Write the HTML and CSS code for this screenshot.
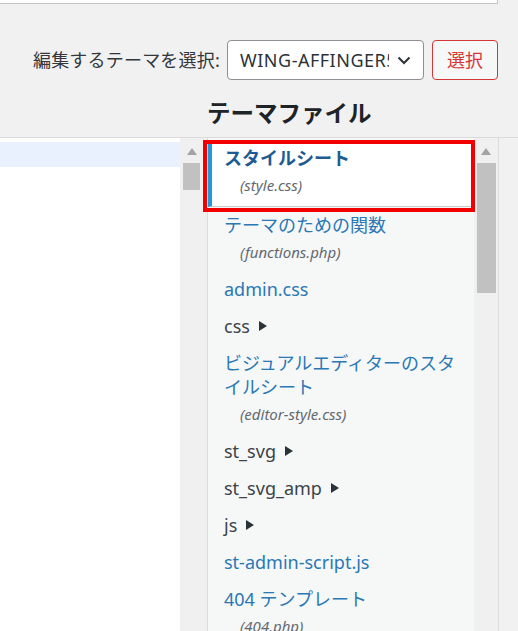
FILE: index.html
```html
<!DOCTYPE html>
<html lang="ja">
<head>
<meta charset="utf-8">
<title>テーマファイル</title>
<link rel="stylesheet" href="styles.css">
</head>
<body>
<div class="page">
  <div class="topbox"></div>

  <form class="theme-select">
    <label class="label">編集するテーマを選択:</label>
    <div class="select">
      <span class="select-text">WING-AFFINGER5</span>
      <svg class="chevron" width="14" height="9" viewBox="0 0 14 9"><path d="M1.5 1.5 L7 7 L12.5 1.5" fill="none" stroke="#2c3338" stroke-width="2"/></svg>
    </div>
    <button type="button" class="btn">選択</button>
  </form>

  <div class="heading-row">
    <h2 class="heading">テーマファイル</h2>
  </div>

  <div class="main">
    <div class="editor">
      <div class="code">
        <div class="active-line"></div>
      </div>
      <div class="scroll scroll-left">
        <div class="arrow-up"></div>
        <div class="thumb thumb-left"></div>
      </div>
    </div>

    <div class="sidebar">
      <ul class="files">
        <li class="file current">
          <a class="name">スタイルシート</a>
          <span class="sub">(style.css)</span>
        </li>
        <li class="file">
          <a class="name">テーマのための関数</a>
          <span class="sub">(functions.php)</span>
        </li>
        <li class="file"><a class="name">admin.css</a></li>
        <li class="file folder"><span class="dir">css</span></li>
        <li class="file">
          <a class="name">ビジュアルエディターのスタイルシート</a>
          <span class="sub">(editor-style.css)</span>
        </li>
        <li class="file folder"><span class="dir">st_svg</span></li>
        <li class="file folder"><span class="dir">st_svg_amp</span></li>
        <li class="file folder"><span class="dir">js</span></li>
        <li class="file"><a class="name">st-admin-script.js</a></li>
        <li class="file">
          <a class="name">404 テンプレート</a>
          <span class="sub">(404.php)</span>
        </li>
      </ul>
      <div class="scroll scroll-right">
        <div class="arrow-up"></div>
        <div class="thumb thumb-right"></div>
      </div>
      <div class="annotation"></div>
    </div>
  </div>
</div>
</body>
</html>
```

FILE: styles.css
```css
html, body {
  margin: 0;
  padding: 0;
  background: #f1f1f1;
  height: 631px;
  overflow: hidden;
}

.page {
  display: flex;
  flex-direction: column;
  height: 631px;
  font-family: "Noto Sans", "Noto Sans CJK JP", sans-serif;
  color: #2c3338;
}

.topbox {
  width: 497px;
  height: 3px;
  background: #ffffff;
  border-right: 1px solid #c3c4c7;
  border-bottom: 1px solid #c3c4c7;
}

.theme-select {
  display: flex;
  justify-content: flex-end;
  align-items: center;
  margin: 36px 0 0 0;
  padding-right: 20px;
  height: 40px;
}

.label {
  font-size: 18px;
  line-height: 24px;
  letter-spacing: 0.2px;
  color: #32373c;
  margin-right: 7px;
}

.select {
  box-sizing: border-box;
  width: 197px;
  height: 40px;
  border: 1px solid #8c8f94;
  border-radius: 4px;
  background: #ffffff;
  display: flex;
  align-items: center;
  padding-left: 12px;
}

.select-text {
  width: 149px;
  overflow: hidden;
  white-space: nowrap;
  font-size: 18px;
  line-height: 24px;
  letter-spacing: 0.5px;
  color: #2c3338;
}

.chevron {
  margin-left: 8px;
}

.btn {
  box-sizing: border-box;
  width: 66px;
  height: 40px;
  margin-left: 8px;
  border: 1px solid #d63638;
  border-radius: 4px;
  background: #f6f7f7;
  color: #d63638;
  font-family: "Noto Sans", "Noto Sans CJK JP", sans-serif;
  font-size: 18px;
  line-height: 24px;
  padding: 0;
}

.heading-row {
  margin-top: 18px;
  padding-left: 207px;
}

.heading {
  margin: 0;
  font-size: 23.5px;
  line-height: 30px;
  font-weight: 700;
  color: #1d2327;
}

.main {
  margin-top: 9px;
  border-top: 1px solid #dcd9da;
  display: flex;
  flex: 1;
  min-height: 0;
}

.editor {
  display: flex;
  width: 207px;
}

.code {
  width: 180px;
  background: #ffffff;
}

.active-line {
  margin-top: 4px;
  height: 25px;
  background: #e8f1fd;
}

.scroll {
  display: flex;
  flex-direction: column;
  background: #f0f0f0;
}

.scroll-left {
  width: 27px;
}

.scroll-right {
  width: 24px;
  align-items: center;
}

.arrow-up {
  width: 0;
  height: 0;
  border-left: 5.5px solid transparent;
  border-right: 5.5px solid transparent;
  border-bottom: 7px solid #a3a3a3;
  margin-top: 10px;
}

.scroll-left .arrow-up {
  margin-left: 7px;
}

.thumb {
  background: #c1c1c1;
}

.thumb-left {
  margin-top: 8px;
  margin-left: 3px;
  width: 17px;
  height: 27px;
}

.thumb-right {
  margin-top: 8px;
  width: 19px;
  height: 130px;
}

.sidebar {
  position: relative;
  display: flex;
  border-left: 1px solid #dcdcde;
  border-right: 1px solid #dcdcde;
  background: #f6f7f7;
}

.files {
  list-style: none;
  margin: 0;
  padding: 6px 0 0 0;
  width: 266px;
}

.file {
  padding: 6px 6px 7px 16px;
}

.name {
  display: block;
  font-size: 18px;
  line-height: 24px;
  color: #2a78b4;
}

.sub {
  display: block;
  margin-top: 3px;
  padding-left: 16px;
  font-size: 15px;
  line-height: 24px;
  font-style: italic;
  color: #646970;
}

.current {
  background: #ffffff;
  border-left: 4px solid #1f9ad6;
  border-bottom: 1px solid #c9cacc;
  padding: 2px 6px 9px 12px;
}

.current .name {
  font-weight: 700;
  color: #1d5c92;
}

.dir {
  display: inline-flex;
  align-items: center;
  font-size: 18px;
  line-height: 24px;
  color: #3c434a;
}

.dir::after {
  content: "";
  width: 0;
  height: 0;
  margin-left: 9px;
  border-left: 8px solid #2c3338;
  border-top: 5px solid transparent;
  border-bottom: 5px solid transparent;
}

.annotation {
  position: absolute;
  left: -5px;
  top: 2px;
  width: 264px;
  height: 64px;
  border: 4px solid #f20000;
  pointer-events: none;
}
```
